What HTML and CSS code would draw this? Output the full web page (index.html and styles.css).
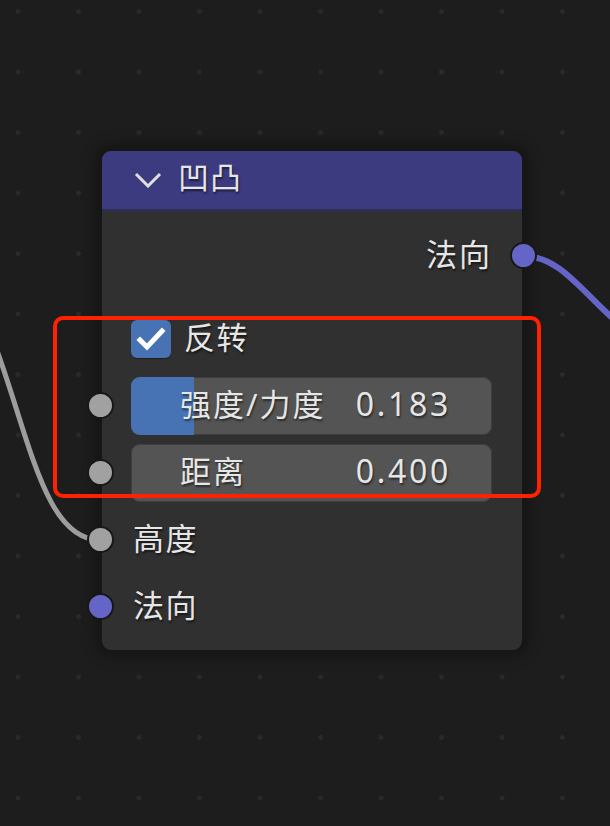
FILE: index.html
```html
<!DOCTYPE html>
<html lang="zh">
<head>
<meta charset="utf-8">
<link rel="stylesheet" href="styles.css">
</head>
<body>
<div class="canvas">
  <svg class="wires" width="610" height="826" viewBox="0 0 610 826">
    <path class="wire-gray" d="M -5 345 C 30 440, 45 540, 100 540"/>
    <path class="wire-blue" d="M 523 256 C 560 256, 580 290, 620 325"/>
  </svg>
  <div class="node">
    <div class="header">
      <svg class="chevron" width="28" height="16" viewBox="0 0 28 16"><polyline points="2,2 14,14 26,2"/></svg>
      <span class="title">凹凸</span>
    </div>
    <div class="body">
      <div class="row out">
        <span class="label">法向</span>
        <span class="socket vec right"></span>
      </div>
      <div class="row check-row">
        <span class="checkbox"><svg width="40" height="38" viewBox="0 0 40 38"><polyline points="9,20 16,27 31,11"/></svg></span>
        <span class="label">反转</span>
      </div>
      <div class="row">
        <span class="socket gray left"></span>
        <div class="slider">
          <div class="fill" style="width:63px"></div>
          <span class="s-label">强度/力度</span>
          <span class="s-value">0.183</span>
        </div>
      </div>
      <div class="row">
        <span class="socket gray left"></span>
        <div class="slider">
          <span class="s-label">距离</span>
          <span class="s-value">0.400</span>
        </div>
      </div>
      <div class="row">
        <span class="socket gray left"></span>
        <span class="label in">高度</span>
      </div>
      <div class="row">
        <span class="socket vec left"></span>
        <span class="label in">法向</span>
      </div>
    </div>
  </div>
  <div class="highlight"></div>
</div>
</body>
</html>
```
FILE: styles.css
```css
html, body {
  margin: 0;
  padding: 0;
  background: #1d1d1d;
}
.canvas {
  position: relative;
  width: 610px;
  height: 826px;
  overflow: hidden;
  background-color: #1d1d1d;
  background-image: radial-gradient(circle, #2a2a2a 2px, rgba(42,42,42,0) 2.6px);
  background-size: 60.5px 60.5px;
  background-position: -12.25px -18.75px;
  font-family: "Noto Sans", "Noto Sans CJK SC", sans-serif;
  color: #e6e6e6;
}
.wires {
  position: absolute;
  left: 0;
  top: 0;
}
.wire-gray {
  fill: none;
  stroke: #9d9d9d;
  stroke-width: 5;
}
.wire-blue {
  fill: none;
  stroke: #6565c8;
  stroke-width: 6;
}
.node {
  position: absolute;
  left: 100px;
  top: 149px;
  width: 420px;
  border: 2px solid #161616;
  border-radius: 11px;
  background: #303030;
  box-shadow: 0 0 14px 4px rgba(0,0,0,0.35);
}
.header {
  height: 58px;
  background: #3d3b80;
  border-bottom: 2px solid #2c2b5e;
  border-radius: 9px 9px 0 0;
  display: flex;
  align-items: center;
  padding-left: 32px;
}
.chevron {
  fill: none;
  stroke: #e0e0e0;
  stroke-width: 3;
}
.chevron polyline { fill: none; }
.title {
  margin-left: 16px;
  margin-bottom: 4px;
  font-size: 31px;
  letter-spacing: 1px;
  line-height: 1.2;
  text-shadow: 1px 2px 2px rgba(0,0,0,0.55);
}
.body {
  padding: 16px 30px 14px 29px;
  display: flex;
  flex-direction: column;
  gap: 9px;
}
.row {
  position: relative;
  height: 58px;
  display: flex;
  align-items: center;
}
.row.out {
  justify-content: flex-end;
  padding-right: 2px;
  margin-bottom: 16px;
}
.label {
  font-size: 31px;
  letter-spacing: 1.5px;
  line-height: 1.2;
  margin-bottom: 3px;
  text-shadow: 1px 2px 2px rgba(0,0,0,0.55);
}
.row.out .label {
  letter-spacing: 2px;
  margin-right: -2px;
}
.label.in {
  margin-left: 2px;
}
.socket {
  position: absolute;
  width: 23px;
  height: 23px;
  border-radius: 50%;
  border: 2px solid #181818;
  top: 15px;
}
.socket.left { left: -44px; }
.socket.right { right: -45px; }
.socket.gray { background: #a1a1a1; }
.socket.vec { background: #6565c8; }
.checkbox {
  width: 40px;
  height: 38px;
  border-radius: 6px;
  background: #4772b3;
  box-shadow: 0 1px 1px rgba(0,0,0,0.4);
  display: block;
  margin-right: 13px;
}
.checkbox svg { display: block; }
.checkbox polyline {
  fill: none;
  stroke: #ffffff;
  stroke-width: 5;
  stroke-linecap: square;
}
.slider {
  position: relative;
  flex: 1;
  height: 58px;
  background: #545454;
  border-radius: 9px;
  overflow: hidden;
  display: flex;
  align-items: center;
  justify-content: space-between;
  padding: 0 41px 0 49px;
  box-sizing: border-box;
  box-shadow: inset 0 0 0 1px #3e3e3e;
}
.fill {
  position: absolute;
  left: 0;
  top: 0;
  bottom: 0;
  background: #4772b3;
}
.s-label, .s-value {
  position: relative;
  font-size: 31px;
  line-height: 1.2;
  margin-bottom: 3px;
  letter-spacing: 2px;
  text-shadow: 1px 2px 2px rgba(0,0,0,0.5);
}
.s-value {
  font-size: 32px;
  letter-spacing: 2.7px;
}
.highlight {
  position: absolute;
  left: 53px;
  top: 316px;
  width: 480px;
  height: 174px;
  border: 4px solid #ff2200;
  border-radius: 10px;
}
```
